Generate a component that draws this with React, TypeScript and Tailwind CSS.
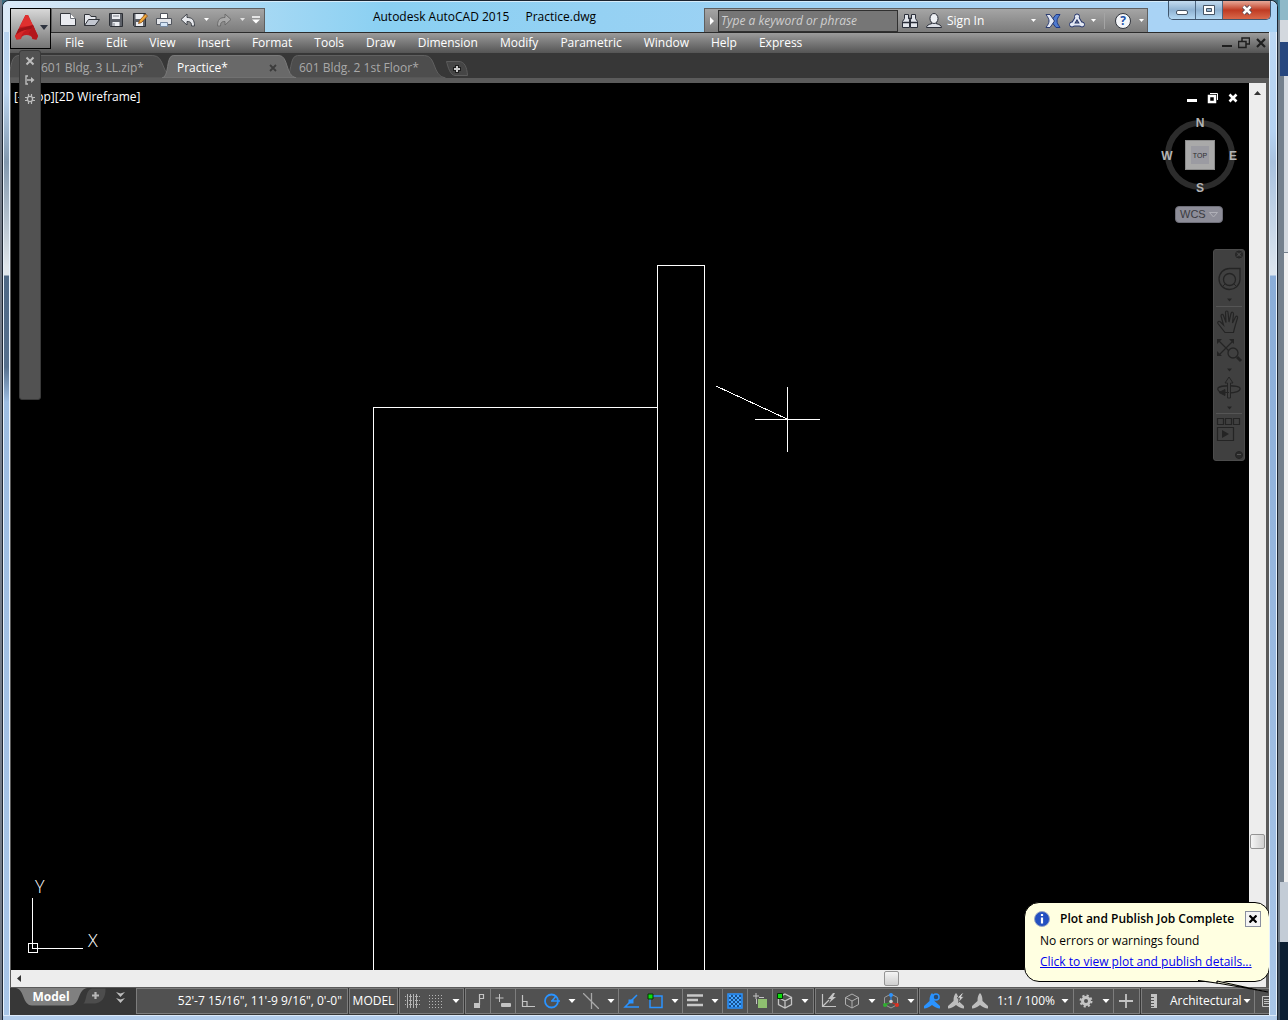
import type { ReactNode } from "react";
import { clsx } from "clsx";

interface IconProps {
  size?: number;
  w?: number;
  h?: number;
  children: ReactNode;
}

function Icon({ size = 16, w, h, children }: IconProps) {
  return (
    <svg
      width={w ?? size}
      height={h ?? size}
      viewBox={`0 0 ${w ?? size} ${h ?? size}`}
      fill="none"
      aria-hidden="true"
      className="shrink-0"
    >
      {children}
    </svg>
  );
}

function Caret({ className = "text-white" }: { className?: string }) {
  return (
    <svg width="8" height="4" viewBox="0 0 8 4" className={clsx("shrink-0", className)} aria-hidden="true">
      <path d="M0.5 0h7L4 4z" fill="currentColor" />
    </svg>
  );
}

function SmallCaret({ className = "text-white" }: { className?: string }) {
  return (
    <svg width="5" height="3" viewBox="0 0 5 3" className={clsx("shrink-0", className)} aria-hidden="true">
      <path d="M0 0h5L2.5 3z" fill="currentColor" />
    </svg>
  );
}

/* ---------- Title bar ---------- */

function ApplicationButton() {
  return (
    <button
      type="button"
      aria-label="Application menu"
      className="absolute top-[7px] left-[7px] z-20 flex h-[41px] w-[41px] items-center justify-between border border-black bg-linear-to-b from-[#d8d8d8] to-[#757575] pr-0.5 pb-0.5 pl-1"
    >
      <svg width="23" height="25" viewBox="0 0 23 25" aria-hidden="true">
        <path d="M10.500 0h2.500l10 21-1.500 3.500-4-.5c-.5-3-3-4-6-4s-5 1-5.500 4l-4.500.5L0 21z" fill="#c31a20" />
        <path d="M10.500 0h2.500l5 10.500L4.500 12z" fill="#e0302f" />
        <path d="M3.500 14L18 10l1.500 3.500C12 14 6 16 1 19.500z" fill="#9c1318" />
        <path d="M18 10l5 11-1.500 3.500-4-.5c0-3-1.500-4.500-4-5z" fill="#b3161b" />
        <path d="M0 21c4-4 8-6 13-6.500-4 1.500-7 4.500-7 9.500l-4.500.5z" fill="#d62828" />
      </svg>
      <svg width="8" height="5" viewBox="0 0 8 5" aria-hidden="true">
        <path d="M0 0h8L4 5z" fill="#2f3440" />
      </svg>
    </button>
  );
}

const quickTools: { label: string; icon: ReactNode }[] = [
  {
    label: "New",
    icon: (
      <Icon>
        <path d="M0.5 1.500h10l5 5v7h-15z" fill="#e9ebf0" stroke="#33363c" />
        <path d="M10.500 1.500v5h5" fill="#fff" stroke="#70747c" />
      </Icon>
    ),
  },
  {
    label: "Open",
    icon: (
      <Icon>
        <path d="M0.500 13.500v-11h5l1.500 2h5v3" fill="#e6e8ed" stroke="#2f3238" />
        <path d="M0.500 13.500l4-6h11l-4.500 6z" fill="#c3c7d0" stroke="#2f3238" />
      </Icon>
    ),
  },
  {
    label: "Save",
    icon: (
      <Icon>
        <path d="M1.500 1.500h13v13h-12l-1-1z" fill="#5c6068" stroke="#2c2f35" />
        <path d="M4 2h8v5H4zM4.500 10h7v4h-7z" fill="#eceef2" />
        <path d="M5 4h6M6 11v3" stroke="#7a7e87" />
      </Icon>
    ),
  },
  {
    label: "Save As",
    icon: (
      <Icon>
        <path d="M1.500 1.500h12v13h-11l-1-1z" fill="#5c6068" stroke="#2c2f35" />
        <path d="M3.500 2h8v5h-8zM4 10h7v4H4z" fill="#eceef2" />
        <path d="M13.500 2l2 2-6 6.500-3 1 1-3z" fill="#f0a83a" stroke="#8a4b12" strokeWidth="0.800" />
      </Icon>
    ),
  },
  {
    label: "Plot",
    icon: (
      <Icon>
        <path d="M4.500 1.500h7v5h-7z" fill="#fff" stroke="#50545c" />
        <path d="M0.500 6.500h15v6H.5z" fill="#e4e6ea" stroke="#50545c" />
        <path d="M4.500 10.500h7v4h-7z" fill="#d5e6f7" stroke="#7688a0" />
      </Icon>
    ),
  },
];

function QuickAccessToolbar() {
  return (
    <div className="mt-[7px] ml-[48px] flex h-6 w-[214px] shrink-0 items-center border border-b-0 border-[#5f5f5f] bg-linear-to-b from-[#a5a5a5] to-[#7c7c7c] pb-0.5 pl-2">
      {quickTools.map(({ label, icon }) => (
        <button key={label} type="button" aria-label={label} className="w-6">
          {icon}
        </button>
      ))}
      <button type="button" aria-label="Undo" className="w-6">
        <Icon>
          <path d="M1 7.500l6-5.500v3.500c5 0 7.500 2 7.500 8.500h-3c0-3.500-1-4.500-4.500-4.500V13z" fill="#e6e8ec" stroke="#41454c" />
        </Icon>
      </button>
      <button type="button" aria-label="Undo history" className="w-3">
        <SmallCaret />
      </button>
      <button type="button" aria-label="Redo" className="w-6">
        <Icon>
          <path d="M15 7.500L9 2v3.500C4 5.500 1.500 7.500 1.500 14h3c0-3.500 1-4.500 4.500-4.500V13z" fill="#a9a9a9" stroke="#6c6c6c" />
        </Icon>
      </button>
      <button type="button" aria-label="Redo history" className="w-3">
        <SmallCaret className="text-[#e2e2e2]" />
      </button>
      <button type="button" aria-label="Customize toolbar">
        <Icon w={8} h={8}>
          <path d="M0 1h8" stroke="#fff" strokeWidth="1.500" />
          <path d="M0 3.500h8L4 7.500z" fill="#fff" />
        </Icon>
      </button>
    </div>
  );
}

function InfoCenter() {
  return (
    <div className="mt-[7px] mr-5 flex h-6 w-[444px] shrink-0 items-center border border-b-0 border-[#5f5f5f] bg-linear-to-b from-[#a5a5a5] to-[#7c7c7c] text-white">
      <button type="button" aria-label="Collapse search" className="grid w-[13px] shrink-0 place-items-center">
        <svg width="4" height="8" viewBox="0 0 4 8" aria-hidden="true">
          <path d="M0 0v8l4-4z" fill="#fff" />
        </svg>
      </button>
      <input
        type="text"
        aria-label="Search"
        placeholder="Type a keyword or phrase"
        className="h-[22px] w-[180px] border border-[#303030] bg-[#767676] px-[2px] text-[12px] italic outline-none placeholder:text-[#cfcfcf]"
      />
      <button type="button" aria-label="Search" className="ml-1">
        <Icon>
          <path d="M2.500 1.500h4v4l1 1v8H.5v-6l2-3zM13.500 1.500h-4v4l-1 1v8h7v-6l-2-3z" fill="#e3e6ec" stroke="#2b2f3a" />
          <path d="M1 9.500h6M9 9.500h6M6.500 5.500h3" stroke="#2b2f3a" strokeWidth="1.500" />
        </Icon>
      </button>
      <button type="button" className="ml-2 flex w-[110px] items-center gap-[5px] text-[12px]">
        <Icon>
          <path d="M0.500 14.500c0-2 2-3 5.500-4v-1h4v1c3.500 1 5.500 2 5.500 4z" fill="#dcdfe6" stroke="#2b2f3a" />
          <ellipse cx="8" cy="5.500" rx="4" ry="5" fill="#eef0f4" stroke="#2b2f3a" />
        </Icon>
        Sign In
        <span className="ml-auto">
          <SmallCaret />
        </span>
      </button>
      <button type="button" aria-label="Exchange apps" className="ml-[9px]">
        <Icon>
          <path d="M15 1.500h-4L6 8l5 6.500h4c-2-3-3-4.500-3-6.500s1-3.500 3-6.500z" fill="#4f7bd0" stroke="#1f3a86" />
          <path d="M1 1.500h4L9.500 8 5 14.500H1C3 11.500 4 10 4 8S3 4.500 1 1.500z" fill="#e4e9f5" stroke="#2b3c70" />
        </Icon>
      </button>
      <button type="button" aria-label="Stay connected" className="ml-2 flex items-center gap-[6px]">
        <Icon>
          <path d="M8 4L3.500 11.500h9z" stroke="#25356b" strokeWidth="4" strokeLinejoin="round" />
          <circle cx="8" cy="3.500" r="2.500" fill="#e3e8f3" stroke="#25356b" />
          <circle cx="3" cy="11.500" r="2.500" fill="#e3e8f3" stroke="#25356b" />
          <circle cx="13" cy="11.500" r="2.500" fill="#e3e8f3" stroke="#25356b" />
          <path d="M8 4L3.500 11.500h9z" stroke="#e3e8f3" strokeWidth="2" />
        </Icon>
        <SmallCaret />
      </button>
      <span className="mx-2 h-4 w-px bg-[#a4a4a4]" />
      <button type="button" aria-label="Help" className="ml-[2px] flex items-center gap-2">
        <span className="grid h-4 w-4 place-items-center rounded-full border border-[#30343c] bg-[#f4f6fa] text-[12px] leading-none font-bold text-[#2050a8]">
          ?
        </span>
        <SmallCaret />
      </button>
    </div>
  );
}

function WindowButtons() {
  return (
    <div className="mr-[6px] flex h-[19px] w-[103px] shrink-0 self-start overflow-hidden rounded-b-[5px] border border-t-0 border-[#40566d]">
      <button type="button" aria-label="Minimize" className="grid flex-1 place-items-center border-r border-[#4d6680] bg-linear-to-b from-[#c4dcf0] via-[#8fb2d2] to-[#b4d8f2]">
        <span className="mt-1 h-[5px] w-3 rounded-xs border border-[#475565] bg-white" />
      </button>
      <button type="button" aria-label="Maximize" className="grid w-[27px] place-items-center border-r border-[#4d6680] bg-linear-to-b from-[#c4dcf0] via-[#8fb2d2] to-[#b4d8f2]">
        <Icon w={12} h={10}>
          <path d="M0.500 0.500h11v9H.5z" fill="#fff" stroke="#475565" />
          <path d="M3.500 3.500h5v3h-5z" fill="#9ab8d4" stroke="#475565" />
        </Icon>
      </button>
      <button type="button" aria-label="Close" className="grid w-[47px] place-items-center bg-linear-to-b from-[#e6a898] via-[#bf3a22] to-[#d9684a]">
        <Icon w={12} h={10}>
          <path d="M2.500 1.500l7 7M9.500 1.500l-7 7" stroke="#5a4a55" strokeWidth="4.500" />
          <path d="M2.500 1.500l7 7M9.500 1.500l-7 7" stroke="#fff" strokeWidth="2.600" />
        </Icon>
      </button>
    </div>
  );
}

function TitleBar() {
  return (
    <header className="flex h-[31px] shrink-0 rounded-t-[6px] border-t border-[#d6ecfa] bg-linear-to-r from-[#dbe9f7] from-0% via-[#8ad0f2] via-30% to-[#a9d3f5] to-80%">
      <div className="-mt-px flex min-w-0 flex-1">
        <QuickAccessToolbar />
        <h1 className="flex flex-1 items-center justify-center gap-4 text-[12px] text-black">
          <span>Autodesk AutoCAD 2015</span>
          <span>Practice.dwg</span>
        </h1>
        <InfoCenter />
        <WindowButtons />
      </div>
    </header>
  );
}

/* ---------- Menus and file tabs ---------- */

const menus = [
  "File",
  "Edit",
  "View",
  "Insert",
  "Format",
  "Tools",
  "Draw",
  "Dimension",
  "Modify",
  "Parametric",
  "Window",
  "Help",
  "Express",
];

function MenuBar() {
  return (
    <nav className="flex h-[21px] shrink-0 items-center justify-between border-t border-[#2b2b2b] bg-linear-to-b from-[#9c9c9c] to-[#555] pr-[3px] pl-[55px] text-[12px] text-white">
      <div className="flex gap-[22px]">
        {menus.map((menu) => (
          <button key={menu} type="button">
            {menu}
          </button>
        ))}
      </div>
      <div className="flex gap-1.5">
        <button type="button" aria-label="Minimize drawing">
          <Icon w={10} h={12}>
            <path d="M0 9h10" stroke="#1f1f1f" strokeWidth="2" />
          </Icon>
        </button>
        <button type="button" aria-label="Restore drawing">
          <Icon w={12} h={12}>
            <path d="M4 4V1h7.500v6H8" stroke="#1f1f1f" strokeWidth="1.500" />
            <path d="M0.500 4.500h7.500v6H.5z" stroke="#1f1f1f" strokeWidth="1.500" />
          </Icon>
        </button>
        <button type="button" aria-label="Close drawing">
          <Icon w={10} h={12}>
            <path d="M1 2l8 8M9 2l-8 8" stroke="#1f1f1f" strokeWidth="2.200" />
          </Icon>
        </button>
      </div>
    </nav>
  );
}

interface FileTabProps {
  label: string;
  active?: boolean;
  className: string;
}

function FileTab({ label, active, className }: FileTabProps) {
  return (
    <button
      type="button"
      className={clsx("relative flex h-[23px] items-center pt-0.5 text-left text-[12px]", active ? "z-10 text-white" : "text-[#a9a9a9]", className)}
    >
      <svg
        viewBox="0 0 100 23"
        preserveAspectRatio="none"
        className="absolute inset-0 h-full w-full overflow-visible"
        aria-hidden="true"
      >
        <path
          d="M-4 23 C2 22 -1 1 5 0.500 H91 C99 0.500 96 21 105 23 Z"
          className={active ? "fill-[#696969]" : "fill-[#4d4d4d]"}
          stroke={active ? "#7a7a7a" : "#606060"}
          vectorEffect="non-scaling-stroke"
        />
      </svg>
      <span className="relative">{label}</span>
      {active && (
        <span className="relative mr-[13px] ml-auto">
          <Icon w={8} h={8}>
            <path d="M1 1l6 6M7 1l-6 6" stroke="#3c3c3c" strokeWidth="1.800" />
          </Icon>
        </span>
      )}
    </button>
  );
}

function FileTabs() {
  return (
    <div className="flex h-[30px] shrink-0 items-end overflow-hidden border-b-[5px] border-[#5b5b5b] bg-[#373737]">
      <FileTab label="601 Bldg. 3 LL.zip*" className="w-[157px] pl-[31px]" />
      <FileTab label="Practice*" active className="w-[123px] pl-2.5" />
      <FileTab label="601 Bldg. 2 1st Floor*" className="w-[148px] pl-[9px]" />
      <button type="button" aria-label="New tab" className="mb-0.5 ml-2">
        <Icon w={22} h={15}>
          <path d="M0.500 0.500H13c5 0 8 5 8.500 14H9C4 14 2 6 0.500 0.500z" fill="#454545" stroke="#5c5c5c" />
          <path d="M11 4v8M7 8h8" stroke="#1d1d1d" strokeWidth="4" />
          <path d="M11 5v6M8 8h6" stroke="#c8c8c8" strokeWidth="2" />
        </Icon>
      </button>
    </div>
  );
}

function CommandPalette() {
  return (
    <aside className="absolute top-[18px] left-[9px] z-10 flex h-[350px] w-[22px] flex-col items-center gap-[9px] rounded-[3px] border border-[#3a3a3a] bg-[#525252] pt-[5px]">
      <button type="button" aria-label="Close palette">
        <Icon size={10}>
          <path d="M1.500 1.500l7 7M8.500 1.500l-7 7" stroke="#bdbdbd" strokeWidth="2" />
        </Icon>
      </button>
      <button type="button" aria-label="Auto-hide">
        <Icon size={10}>
          <path d="M3 1H1v8h2M2 5h6" stroke="#bdbdbd" strokeWidth="1.400" />
          <path d="M6 2l3.500 3L6 8z" fill="#bdbdbd" />
        </Icon>
      </button>
      <button type="button" aria-label="Properties">
        <Icon size={10}>
          <circle cx="5" cy="5" r="2.600" stroke="#bdbdbd" strokeWidth="1.400" />
          <path d="M3.500 0v2.500M6.500 0v2.500M3.500 7.500V10M6.500 7.500V10M0 3.500h2.500M0 6.500h2.500M7.500 3.500H10M7.500 6.500H10" stroke="#bdbdbd" strokeWidth="1.200" />
        </Icon>
      </button>
    </aside>
  );
}

/* ---------- Drawing area ---------- */

function ViewCube() {
  return (
    <div className="absolute top-[32px] right-2 flex w-[82px] flex-col items-center">
      <svg width="82" height="80" viewBox="0 0 82 80" fontFamily="Liberation Sans, Arial, sans-serif">
        <circle cx="41" cy="40" r="32" fill="none" stroke="#2c2c2c" strokeWidth="6" />
        <g fill="#b4b4b4" fontSize="12" fontWeight="bold" textAnchor="middle">
          <text x="41" y="12">N</text>
          <text x="41" y="77">S</text>
          <text x="8" y="45">W</text>
          <text x="74" y="45">E</text>
        </g>
        <rect x="26.500" y="25.500" width="29" height="29" fill="#a9a9a9" stroke="#8a8a8a" />
        <rect x="32" y="31" width="18" height="18" fill="#9b9ba2" />
        <text x="41" y="43" fontSize="7" fill="#2c2c30" textAnchor="middle">
          TOP
        </text>
      </svg>
      <button
        type="button"
        className="mt-[11px] mr-[2px] flex h-[17px] w-12 items-center justify-between rounded-[4px] border border-[#6e6e78] bg-[#8d8d98] px-1 font-['Liberation_Sans',Arial,sans-serif] text-[11px] text-[#3a3a3f]"
      >
        WCS
        <Icon w={9} h={6}>
          <path d="M0.500 0.500h8l-4 4.500z" stroke="#b0b0b8" />
        </Icon>
      </button>
    </div>
  );
}

function NavigationBar() {
  return (
    <div className="absolute top-[166px] right-[4px] flex h-[212px] w-8 flex-col items-center rounded-[3px] border border-[#4c4c4c] bg-[#404040]">
      <svg width="30" height="210" viewBox="0 0 30 210" fill="none" stroke="#242424" aria-hidden="true">
        <circle cx="25" cy="4.500" r="3.500" fill="#2a2a2a" />
        <path d="M23 2.500l4 4M27 2.500l-4 4" stroke="#555" />
        <path d="M15.500 18.500h10.500v11A10.500 10.500 0 1 1 15.500 18.500z" strokeWidth="1.300" />
        <circle cx="15.500" cy="29.500" r="6" strokeWidth="1.300" />
        <path d="M11 34l-3 3M20 34l3 3" />
        <path d="M13 48.500h5l-2.500 3z" fill="#242424" stroke="none" />
        <path d="M2 56.500h26" stroke="#555" />
        <path
          d="M11 82.500l-7-9c-1-2 1-3 2.500-1.500l3 3-2.500-9c0-2 2-2 2.500-.5l2.500 7-.5-10c0-2 2.500-2 2.500 0l1 9.500 2-8.500c.5-2 2.500-1.500 2.500.5l-1 9 3-6c1-1.500 2.500-.5 2 1-1.500 5-3 9.500-4 14.500z"
          strokeWidth="1.200"
        />
        <path d="M5 91l14 14M19 91L5 105" strokeWidth="1.200" />
        <path d="M3 89h5l-5 5zM20 89h-5l5 5zM3 106h5l-5-5z" fill="#242424" stroke="none" />
        <circle cx="19" cy="103" r="5" strokeWidth="1.300" fill="#404040" />
        <path d="M23 107l4 4" strokeWidth="3" />
        <path d="M13 118.500h5l-2.500 3z" fill="#242424" stroke="none" />
        <path d="M9 143c-4-1-6-3-5-5 3-3 20-3 22 0 1 3-4 5-12 5" strokeWidth="1.300" />
        <path d="M13.500 148v-15h-2.500l4-6 4 6h-2.500v15z" fill="#404040" />
        <path d="M5 142.500l6-3v6zM10 142.500h5" fill="#242424" />
        <path d="M13 156.500h5l-2.500 3z" fill="#242424" stroke="none" />
        <path d="M2 163.500h26" stroke="#555" />
        <path d="M3.500 168.500h6v6h-6zM11.500 168.500h6v6h-6zM19.500 168.500h6v6h-6zM3.500 177.500h16v13h-16z" strokeWidth="1.200" />
        <path d="M8 180v8l7-4z" fill="#242424" stroke="none" />
        <circle cx="25" cy="205" r="3.500" fill="#2a2a2a" />
        <path d="M23 204.500h4" stroke="#555" />
      </svg>
    </div>
  );
}

function DrawingCanvas() {
  return (
    <main className="relative flex-1 overflow-hidden bg-black">
      <svg className="absolute inset-0 h-full w-full" stroke="#fff" fill="none" shapeRendering="crispEdges" aria-label="Drawing">
        <path d="M362.500 2000V324.500H646.500" />
        <path d="M646.500 2000V182.500H693.500V2000" />
        <path d="M705 303L776 336" />
        <path d="M744 336.500h65M776.500 304v65" />
      </svg>
      <p className="absolute top-[5px] left-[3px] text-[12px] leading-[18px] text-white">[-][Top][2D Wireframe]</p>
      <svg className="absolute bottom-0 left-4" width="80" height="96" viewBox="0 0 80 96" stroke="#fff" fill="none" aria-label="UCS icon">
        <path d="M5.500 24v50.500H56M1.500 69.500h9v9h-9z" shapeRendering="crispEdges" />
        <g fill="#fff" stroke="none" fontSize="18" fontFamily="Open Sans, sans-serif" fontWeight="300">
          <text x="8" y="19">Y</text>
          <text x="61" y="73">X</text>
        </g>
      </svg>
      <div className="absolute top-[9px] right-[11px] flex gap-2.5">
        <button type="button" aria-label="Minimize viewport">
          <Icon w={10} h={12}>
            <path d="M0 8.500h10" stroke="#fff" strokeWidth="3" />
          </Icon>
        </button>
        <button type="button" aria-label="Restore viewport">
          <Icon w={11} h={12}>
            <path d="M3 1.500h7.500V8" stroke="#fff" />
            <path d="M2 4h6v6H2z" stroke="#fff" strokeWidth="2.500" />
          </Icon>
        </button>
        <button type="button" aria-label="Close viewport">
          <Icon w={10} h={12}>
            <path d="M1.500 2.500l7 7M8.500 2.500l-7 7" stroke="#fff" strokeWidth="2.600" />
          </Icon>
        </button>
      </div>
      <ViewCube />
      <NavigationBar />
    </main>
  );
}

/* ---------- Status bar ---------- */

function Cell({ className, children }: { className?: string; children: ReactNode }) {
  return <div className={clsx("flex shrink-0 items-center border-l border-[#7d7d7d] first:border-l-0", className)}>{children}</div>;
}

function Group({ className, children }: { className?: string; children: ReactNode }) {
  return <div className={clsx("flex border border-[#7d7d7d] bg-[#515151]", className ?? "shrink-0")}>{children}</div>;
}

function Toggle({ label, children }: { label: string; children: ReactNode }) {
  return (
    <button type="button" aria-label={label} className="grid w-6 shrink-0 place-items-center">
      <Icon>{children}</Icon>
    </button>
  );
}

function Drop({ label }: { label: string }) {
  return (
    <button type="button" aria-label={label} className="grid h-full w-[15px] shrink-0 place-items-center">
      <Caret />
    </button>
  );
}

const cubePath = "M8 1l6.500 3.500v7L8 15l-6.500-3.500v-7zM1.500 4.500L8 8l6.500-3.500M8 8v7";
const scalePath = "M8 0c1.500 1.500 2.500 3.500 2.500 8l5.500 5v2.500c-3 0-5-1.500-8-3.500-3 2-5 3.500-8 3.500V13l5.500-5C5.500 3.500 6.500 1.500 8 0z";

function StatusBar() {
  return (
    <footer className="flex h-[28px] shrink-0 border-t border-[#5b5b5b] bg-[#373737] text-[12px] text-white">
      <div className="flex w-[126px] shrink-0 items-start">
        <button type="button" className="relative ml-[11px] h-[18px] w-[60px] text-[12px] leading-[18px] font-bold">
          <svg viewBox="0 0 60 18" className="absolute inset-0 overflow-visible" aria-hidden="true">
            <path d="M-5 0C4 2 1 17 11 17.500H49C60 17 56 2 66 0z" fill="#808080" />
          </svg>
          <span className="relative">Model</span>
        </button>
        <button type="button" aria-label="New layout" className="ml-[2px]">
          <Icon w={23} h={17}>
            <path d="M0.500 15.500C4 13 2 2 9 0.500h13.500C23 10 18 15 12 15.500z" fill="#4d4d4d" />
            <path d="M12.500 4v7M9 7.500h7" stroke="#b8b8b8" strokeWidth="2.200" />
          </Icon>
        </button>
        <button type="button" aria-label="More layouts" className="mt-1 ml-2.5">
          <Icon w={9} h={12}>
            <path d="M0 0l4.500 1.500L9 0 4.500 5zM0 6l4.500 1.500L9 6l-4.500 5z" fill="#bdbdbd" />
          </Icon>
        </button>
      </div>
      <div className="flex min-w-0 flex-1 gap-px overflow-hidden pb-px">
        <Group className="min-w-[120px] flex-1 items-center justify-end pr-[5px] whitespace-nowrap">
          52'-7 15/16", 11'-9 9/16", 0'-0"
        </Group>
        <Group>
          <button type="button" className="w-[47px] text-[12px]">
            MODEL
          </button>
        </Group>
        <Group>
          <Cell>
            <Toggle label="Grid display">
              <path d="M3.500 1v14M6.500 1v14M9.500 1v14M12.500 1v14" stroke="#b5b5b5" />
              <path d="M1 3.500h15M1 7.500h15M1 11.500h15" stroke="#b5b5b5" strokeDasharray="1 1" />
            </Toggle>
            <Toggle label="Snap mode">
              <path
                d="M1 2.500h14M1 5.500h14M1 8.500h14M1 11.500h14M1 14.500h14"
                stroke="#b5b5b5"
                strokeDasharray="1 2"
              />
            </Toggle>
            <Drop label="Snap settings" />
          </Cell>
        </Group>
        <Group>
          <Cell className="w-6">
            <Toggle label="Infer constraints">
              <path d="M9.500 1.500h4v4h-4zM9.500 5.500V12" stroke="#c4c4c4" strokeWidth="1.200" />
              <path d="M4 10h6v5H4z" fill="#c4c4c4" />
            </Toggle>
          </Cell>
          <Cell className="w-[25px]">
            <Toggle label="Dynamic input">
              <path d="M4.500 1v8M0.500 5h8" stroke="#c4c4c4" />
              <rect x="6" y="10" width="10" height="4" rx="1" fill="#c4c4c4" />
            </Toggle>
          </Cell>
          <Cell className="w-[103px]">
            <Toggle label="Ortho mode">
              <path d="M2.500 2v11.500H15M2.500 8.500h4.500v5" stroke="#c4c4c4" strokeWidth="1.200" />
            </Toggle>
            <Toggle label="Polar tracking">
              <circle cx="7.500" cy="8" r="6.500" stroke="#2a93ff" strokeWidth="1.800" />
              <path d="M7 8h9M8 8l4-5" stroke="#2a93ff" strokeWidth="1.500" />
            </Toggle>
            <Drop label="Polar settings" />
            <Toggle label="Isometric drafting">
              <path d="M0 0l16 16M8.500 0v16" stroke="#a8a8a8" strokeWidth="1.300" />
            </Toggle>
            <Drop label="Isometric plane" />
          </Cell>
          <Cell className="w-16">
            <Toggle label="Object snap tracking">
              <path d="M14 2L2 14h14" stroke="#2a93ff" strokeWidth="1.500" />
              <path d="M5.500 6.500h5v4h-5z" fill="#2a93ff" />
            </Toggle>
            <Toggle label="Object snap">
              <path d="M3 3h12v11.500H3z" stroke="#2a93ff" strokeWidth="1.500" />
              <path d="M1 1h5v5H1z" fill="#0be00b" stroke="#053505" />
            </Toggle>
            <Drop label="Object snap settings" />
          </Cell>
          <Cell className="w-10">
            <Toggle label="Lineweight">
              <path d="M0 2.500h16M0 7h11M0 12h16" stroke="#c8c8c8" strokeWidth="2.500" />
            </Toggle>
            <Drop label="Lineweight settings" />
          </Cell>
          <Cell className="w-[25px]">
            <Toggle label="Transparency">
              <rect x="1" y="1" width="14" height="14" fill="#17508f" />
              <path d="M2 3h12M2 7h12M2 11h12" stroke="#45a5ff" strokeDasharray="2 2" strokeWidth="2" />
              <path d="M4 5h10M4 9h10M4 13h10" stroke="#45a5ff" strokeDasharray="2 2" strokeWidth="2" />
              <rect x="1" y="1" width="14" height="14" stroke="#2a93ff" strokeWidth="1.500" />
            </Toggle>
          </Cell>
          <Cell className="w-[25px]">
            <Toggle label="Selection cycling">
              <path d="M4 0v6M1 3h6M4.500 6v5M7 4.500h5" stroke="#c4c4c4" />
              <path d="M6 6h9v9H6z" fill="#8fbf70" />
            </Toggle>
          </Cell>
          <Cell className="w-[41px]">
            <Toggle label="3D object snap">
              <path d={cubePath} stroke="#c4c4c4" strokeWidth="1.300" />
              <path d="M0.500 0.500h5v5h-5z" fill="#0be00b" stroke="#053505" />
            </Toggle>
            <Drop label="3D object snap settings" />
          </Cell>
        </Group>
        <Group>
          <Cell className="w-[101px]">
            <Toggle label="Dynamic UCS">
              <path d="M2.500 1v12.500H16M2.500 13.500L9 7" stroke="#c4c4c4" strokeWidth="1.200" />
              <path d="M13 0L8 6h3l-2 4 7-6h-3l2-4z" fill="#c4c4c4" />
            </Toggle>
            <Toggle label="Selection filtering">
              <path d={cubePath} stroke="#b0b0b0" />
            </Toggle>
            <Drop label="Filter settings" />
            <Toggle label="Gizmo">
              <path d="M8 1l6.500 3.500v7L8 15l-6.500-3.500v-7z" stroke="#9a9a9a" />
              <path d="M8 9V3" stroke="#2a93ff" />
              <path d="M8 9l6 3" stroke="#e03020" />
              <path d="M8 9l-6 3" stroke="#30b030" />
              <circle cx="8" cy="2" r="2" fill="#2a93ff" />
              <circle cx="14" cy="12" r="2" fill="#e03020" />
              <circle cx="2" cy="12" r="2" fill="#30b030" />
              <circle cx="8" cy="8.500" r="1.800" fill="#ccc" />
            </Toggle>
            <Drop label="Gizmo settings" />
          </Cell>
        </Group>
        <Group>
          <Cell className="w-[153px]">
            <Toggle label="Annotation visibility">
              <path d={scalePath} fill="#2a93ff" />
              <circle cx="12" cy="4" r="3" stroke="#2a93ff" strokeWidth="1.500" fill="#294d75" />
            </Toggle>
            <Toggle label="Auto scale">
              <path d={scalePath} fill="#bdbdbd" />
              <path d="M14 0l-5 5h2.500l-1 4.500 5.500-6h-2.500l2-3.500z" fill="#d0d0d0" stroke="#515151" strokeWidth="0.800" />
            </Toggle>
            <Toggle label="Annotation scale">
              <path d={scalePath} fill="#bdbdbd" />
            </Toggle>
            <button type="button" className="flex flex-1 items-center justify-between pr-1 pl-[5px] whitespace-nowrap">
              1:1 / 100%
              <Caret />
            </button>
          </Cell>
          <Cell className="w-10">
            <Toggle label="Workspace">
              <circle cx="8" cy="8" r="3.500" stroke="#c4c4c4" strokeWidth="3" />
              <circle cx="8" cy="8" r="5.500" stroke="#c4c4c4" strokeWidth="2" strokeDasharray="2.200 2.100" />
            </Toggle>
            <Drop label="Workspace settings" />
          </Cell>
          <Cell className="w-[26px]">
            <Toggle label="Annotation monitor">
              <path d="M8 1v14M1 8h14" stroke="#c4c4c4" strokeWidth="1.800" />
            </Toggle>
          </Cell>
        </Group>
        <div className="flex w-[128px] shrink-0 overflow-hidden border border-r-0 border-[#7d7d7d] bg-[#515151]">
          <Cell className="w-[112px]">
            <Toggle label="Units">
              <path d="M5 1h6v14H5v-1h3v-1H5v-2h3v-1H5V8h3V7H5V5h3V4H5z" fill="#c4c4c4" />
            </Toggle>
            <button type="button" className="flex flex-1 items-center justify-between pr-[3px] pl-1">
              Architectural
              <Caret />
            </button>
          </Cell>
          <Cell>
            <Toggle label="Quick properties">
              <path d="M3.500 3.500h9v10h-9z" stroke="#c4c4c4" />
              <path d="M5 6.500h6M5 8.500h6M5 10.500h6" stroke="#c4c4c4" />
            </Toggle>
          </Cell>
        </div>
      </div>
    </footer>
  );
}

function PlotBalloon() {
  return (
    <section className="absolute right-[-1px] bottom-[33px] z-20 h-20 w-[246px] rounded-[15px] border border-black bg-[#ffffe1] pr-2 pl-[9px] text-[12px] text-black">
      <div className="mt-[7px] flex h-[18px] items-center">
        <Icon>
          <circle cx="8" cy="8" r="7.500" fill="#2350c0" stroke="#9aa8c4" />
          <path d="M8 3v2M8 6.500v6" stroke="#fff" strokeWidth="2.200" />
        </Icon>
        <strong className="ml-2.5 flex-1 font-semibold whitespace-nowrap">Plot and Publish Job Complete</strong>
        <button type="button" aria-label="Close notification" className="grid h-4 w-4 shrink-0 place-items-center border border-[#8a8f9e] bg-[#f4f4f4]">
          <Icon size={8}>
            <path d="M0.500 0.500l7 7M7.500 0.500l-7 7" stroke="#000" strokeWidth="2.200" />
          </Icon>
        </button>
      </div>
      <p className="mt-1 ml-1.5 leading-[18px]">No errors or warnings found</p>
      <a href="#plot-details" className="mt-[3px] ml-1.5 block leading-[18px] whitespace-nowrap text-[#0000ee] underline">
        Click to view plot and publish details...
      </a>
      <svg className="absolute right-px bottom-[-12px]" width="70" height="13" viewBox="0 0 70 13" aria-hidden="true">
        <path d="M0 0h20L70 12z" fill="#ffffe1" />
        <path d="M0 0.500L22 3.500 70 12M19 1v3M19 1L70 12" fill="none" stroke="#000" strokeWidth="1.200" />
      </svg>
    </section>
  );
}

function Workspace() {
  return (
    <div className="flex min-h-0 flex-1 border-r-[3px] border-l border-[#5b5b5b]">
      <div className="flex min-w-0 flex-1 flex-col">
        <DrawingCanvas />
      </div>
      <div className="flex w-[17px] shrink-0 flex-col items-center bg-[#ededed]">
        <svg className="mt-2" width="7" height="4" viewBox="0 0 7 4" aria-hidden="true">
          <path d="M0 4h7L3.500 0z" fill="#333" />
        </svg>
        <div className="mt-auto mb-[121px] h-[15px] w-[15px] rounded-xs border border-[#949494] bg-linear-to-r from-[#f5f5f5] to-[#cfcfcf]" />
      </div>
    </div>
  );
}

function HorizontalScroll() {
  return (
    <div className="flex h-[17px] shrink-0 items-center border-r-[3px] border-l border-[#5b5b5b] bg-[#ededed]">
      <svg className="ml-1.5" width="4" height="7" viewBox="0 0 4 7" aria-hidden="true">
        <path d="M4 0v7L0 3.500z" fill="#333" />
      </svg>
      <div className="mr-[367px] ml-auto h-[15px] w-[15px] rounded-xs border border-[#949494] bg-linear-to-b from-[#f5f5f5] to-[#cfcfcf]" />
    </div>
  );
}

export default function App() {
  return (
    <div className="flex h-screen overflow-hidden bg-[#3c6d80] font-['Open_Sans','Noto_Sans',sans-serif] leading-normal">
      <div className="w-0.5 shrink-0 bg-[#737a86]" />
      <div className="relative flex min-w-0 flex-1 flex-col rounded-t-[7px] border-x border-t border-[#1b2430] bg-[#b3cdec]">
        <ApplicationButton />
        <TitleBar />
        <div className="flex min-h-0 flex-1">
          <div className="w-[7px] shrink-0 border-x border-[#e8f2fc] bg-[linear-gradient(to_bottom,#b9d3ef_0,#bcd5f0_60px,#8298ae_130px,#dfe5ea_235px,#dfe5ea_243px,#4e6885_244px,#56708d_335px,#9dbde2_370px,#a9c6e8_100%)]" />
          <div className="relative flex min-w-0 flex-1 flex-col overflow-hidden">
            <CommandPalette />
            <MenuBar />
            <FileTabs />
            <Workspace />
            <HorizontalScroll />
            <StatusBar />
            <PlotBalloon />
          </div>
          <div className="w-2 shrink-0 border-x border-[#e8f2fc] bg-[linear-gradient(to_bottom,#bcd8f4_0,#b5d2f2_100px,#a9c2df_130px,#dde6ef_243px,#8aadd8_244px,#a9c6e8_100%)]" />
        </div>
        <div className="h-[5px] shrink-0 border-t border-[#dceafa]" />
      </div>
      <div className="flex w-2.5 shrink-0 flex-col">
        <div className="h-5 border-l-2 border-[#4a8ba3] bg-[#8fb9c8]" />
        <div className="h-[22px] border-l-2 border-[#74808c] bg-[#d3d8de]" />
        <div className="h-[34px] border-l-2 border-[#74808c] bg-[#27477e]" />
        <div className="h-[177px] border-b border-l-[6px] border-[#74808c] bg-[#d3d8de]" />
        <div className="flex-1 border-l-[6px] border-[#74808c] bg-[#f0f0f0]" />
        <div className="h-[60px] border-l-2 border-[#74808c] bg-[#c3ccd6]" />
        <div className="h-[78px] border-l-2 border-[#3e4c5c] bg-[#0c1f33]" />
      </div>
    </div>
  );
}
